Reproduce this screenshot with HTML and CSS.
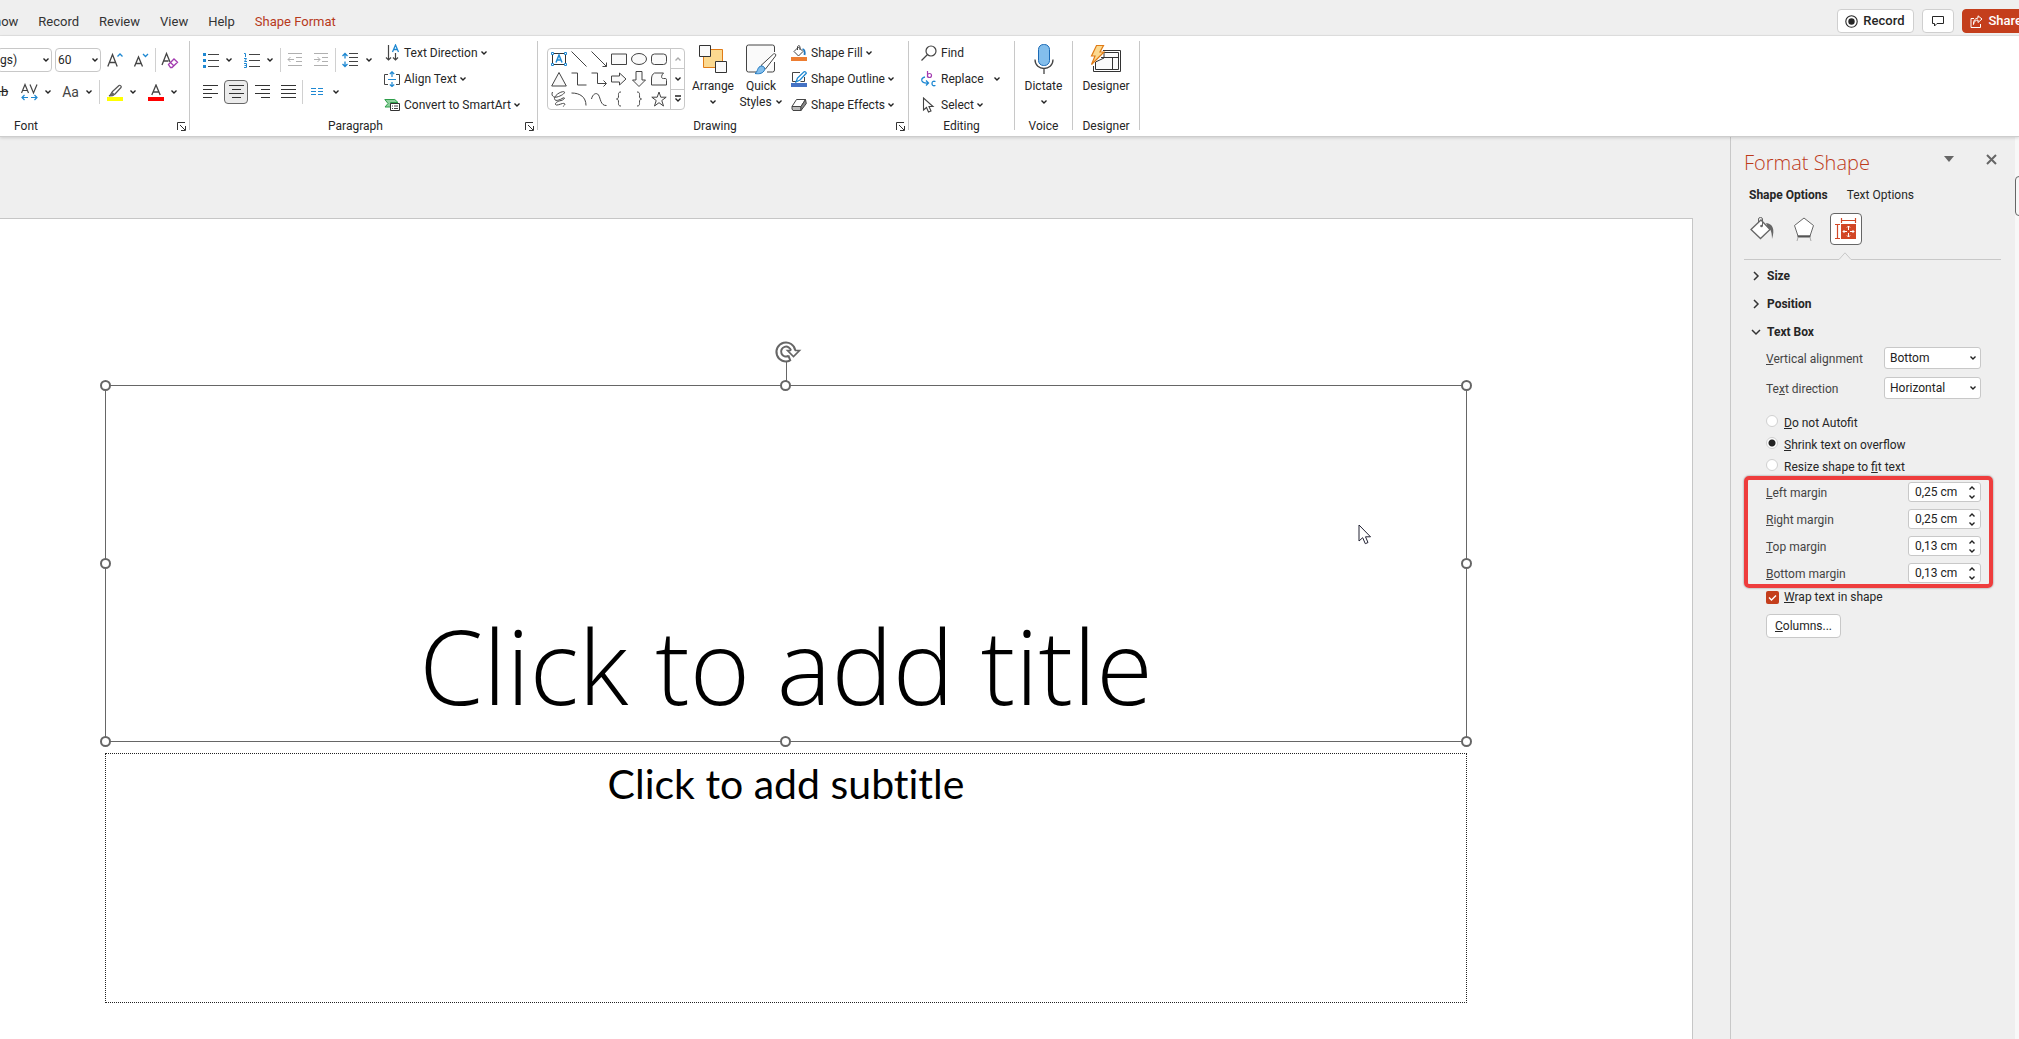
FILE: index.html
```
<!DOCTYPE html>
<html lang="en">
<head>
  <meta charset="UTF-8">
  <meta name="viewport" content="width=device-width, initial-scale=1.0">
  <title>Presentation - Format Shape</title>
  <link rel="stylesheet" href="styles.css">
</head>
<body>
  <!-- shared icons -->
  <svg class="defs" aria-hidden="true">
    <symbol id="chev" viewBox="0 0 8 8"><path d="M1.5 2.5 4 5l2.5-2.5" fill="none" stroke="currentColor" stroke-width="1.4"/></symbol>
    <symbol id="chev-up" viewBox="0 0 8 8"><path d="M1.5 5.5 4 3l2.5 2.5" fill="none" stroke="currentColor" stroke-width="1.4"/></symbol>
    <symbol id="launch" viewBox="0 0 9 9"><path d="M.5 8V.5H8M3 3l5 5M8.5 4v4.5H4" fill="none" stroke="#333"/></symbol>
  </svg>

  <header class="tabbar">
    <nav class="tabs">
      <a href="#">how</a>
      <a href="#">Record</a>
      <a href="#">Review</a>
      <a href="#">View</a>
      <a href="#">Help</a>
      <a href="#" class="current">Shape Format</a>
    </nav>
    <div class="actions">
      <button class="action">
        <svg width="13" height="13" viewBox="0 0 13 13"><circle cx="6.5" cy="6.5" r="5.7" fill="none" stroke="#262626" stroke-width="1.1"/><circle cx="6.5" cy="6.5" r="3.2" fill="#262626"/></svg>
        Record
      </button>
      <button class="action comment" aria-label="Comments">
        <svg width="12" height="12" viewBox="0 0 12 12"><path d="M.5 1.5h11v7H5L2.500 11V8.500H.5z" fill="none" stroke="#262626"/></svg>
      </button>
      <button class="action share">
        <svg width="13" height="13" viewBox="0 0 13 13" fill="none" stroke="#fff"><path d="M4 3.500H1v9h9.500V9"/><path d="M3.500 9.500C4 6.500 5.500 5 8 5V7.500L12 4 8 .800V3C5 3.200 3.300 5.500 3.500 9.500z"/></svg>
        Share
      </button>
    </div>
  </header>

  <section class="ribbon">
    <div class="group font-group">
      <div class="group-body rows">
        <div class="row">
          <button class="combo family"><span>gs)</span><svg class="chev"><use href="#chev"/></svg></button>
          <button class="combo size"><span>60</span><svg class="chev"><use href="#chev"/></svg></button>
          <button class="tool" aria-label="Increase font size"><svg width="16" height="16" viewBox="0 0 16 16" fill="none"><path d="M.8 14.500 5.500 2.500l4.700 12M2.500 10.500h6" stroke="#444" stroke-width="1.300"/><path d="M10.500 4.500 13 2l2.500 2.500" stroke="#1e88d2" stroke-width="1.300"/></svg></button>
          <button class="tool" aria-label="Decrease font size"><svg width="16" height="16" viewBox="0 0 16 16" fill="none"><path d="M1.500 14.500 5.500 5l4 9.500M3 11.500h5" stroke="#444" stroke-width="1.300"/><path d="M10 2l2.500 2.500L15 2" stroke="#1e88d2" stroke-width="1.300"/></svg></button>
          <i class="sep"></i>
          <button class="tool" aria-label="Clear formatting"><svg width="18" height="18" viewBox="0 0 18 18" fill="none"><path d="M1 14 5.500 2.500 9 11M2.500 10h5" stroke="#444" stroke-width="1.300"/><path d="M7.500 13.500 13 8l3.500 3.200L11 16.500H9.500zM9.500 11.500l3.500 3.500" stroke="#a33bb0" stroke-width="1.300"/></svg></button>
        </div>
        <div class="row">
          <button class="tool strike">ab</button>
          <button class="split" aria-label="Character spacing"><svg width="17" height="18" viewBox="0 0 17 18" fill="none"><path d="M.5 10 4 1.500 7.500 10M1.500 7.500h5M9 1.500 12.500 10 16 1.500" stroke="#444" stroke-width="1.200"/><path d="M1 14.500h6M3.500 12 1 14.500 3.500 17M10 14.500h6M13.500 12l2.500 2.500-2.500 2.500" stroke="#1e88d2" stroke-width="1.200"/></svg><svg class="chev"><use href="#chev"/></svg></button>
          <button class="split case"><span>Aa</span><svg class="chev"><use href="#chev"/></svg></button>
          <i class="sep"></i>
          <button class="split" aria-label="Text highlight color"><svg width="16" height="17" viewBox="0 0 16 17"><path d="M2 12c2-1 2-3 3.500-4.500L12 1.500c1-.8 3 1 2 2L8 10c-1.500 1.500-3 2-6 2z" fill="#fff" stroke="#555" stroke-width="1.200"/><path d="M2 12c2-1 2-3 3.500-4L8 10.500c-1.500 1-3 1.500-6 1.500z" fill="#666"/><path d="M0 13h16v4H0z" fill="#ffff00"/></svg><svg class="chev"><use href="#chev"/></svg></button>
          <button class="split" aria-label="Font color"><svg width="16" height="17" viewBox="0 0 16 17"><path d="M3.800 11 8 1l4.200 10M5.300 8h5.400" fill="none" stroke="#444" stroke-width="1.300"/><path d="M0 13h16v4H0z" fill="#f00"/></svg><svg class="chev"><use href="#chev"/></svg></button>
        </div>
      </div>
      <div class="group-label"><span>Font</span><button class="launcher" aria-label="Font settings"><svg width="9" height="9"><use href="#launch"/></svg></button></div>
    </div>

    <div class="group paragraph">
      <div class="group-body">
        <div class="rows">
          <div class="row">
            <button class="split" aria-label="Bullets"><svg width="16" height="16" viewBox="0 0 16 16"><path d="M0 1h3v3H0zM0 7h3v3H0zM0 13h3v3H0z" fill="#1e88d2"/><path d="M5 2.500h11M5 8.500h11M5 14.500h11" stroke="#444"/></svg><svg class="chev"><use href="#chev"/></svg></button>
            <button class="split" aria-label="Numbering"><svg width="16" height="16" viewBox="0 0 16 16" fill="none"><path d="M0 1.500h1.500V5M0 6.500h2.500L.500 9.500H3M0 11.500h2.500v4H0M.5 13.500h2" stroke="#1e88d2"/><path d="M5 2.500h11M5 8.500h11M5 14.500h11" stroke="#444"/></svg><svg class="chev"><use href="#chev"/></svg></button>
            <i class="sep"></i>
            <button class="tool" disabled aria-label="Decrease indent"><svg width="16" height="14" viewBox="0 0 16 14" fill="none" stroke="#b0b0b0"><path d="M1 .5h14M9 4.500h6M9 8.500h6M1 12.500h14M1 6.500h6M3.500 4 1 6.500 3.500 9"/></svg></button>
            <button class="tool" disabled aria-label="Increase indent"><svg width="16" height="14" viewBox="0 0 16 14" fill="none" stroke="#b0b0b0"><path d="M1 .5h14M9 4.500h6M9 8.500h6M1 12.500h14M1 6.500h6M4.500 4 7 6.500 4.500 9"/></svg></button>
            <i class="sep"></i>
            <button class="split" aria-label="Line spacing"><svg width="17" height="16" viewBox="0 0 17 16" fill="none"><path d="M3 1.500v5M3 9.500v5M.5 4 3 1.500 5.500 4M.5 12 3 14.500 5.500 12" stroke="#1e88d2" stroke-width="1.300"/><path d="M7 1.500h9M7 5.500h9M7 9.500h9M7 13.500h9" stroke="#444"/></svg><svg class="chev"><use href="#chev"/></svg></button>
          </div>
          <div class="row">
            <button class="tool" aria-label="Align left"><svg width="15" height="14" viewBox="0 0 15 14" stroke="#333"><path d="M0 .5h15M0 4.500h9M0 8.500h15M0 12.500h9"/></svg></button>
            <button class="tool on" aria-label="Center"><svg width="15" height="14" viewBox="0 0 15 14" stroke="#333"><path d="M0 .5h15M3 4.500h9M0 8.500h15M3 12.500h9"/></svg></button>
            <button class="tool" aria-label="Align right"><svg width="15" height="14" viewBox="0 0 15 14" stroke="#333"><path d="M0 .5h15M6 4.500h9M0 8.500h15M6 12.500h9"/></svg></button>
            <button class="tool" aria-label="Justify"><svg width="15" height="14" viewBox="0 0 15 14" stroke="#333"><path d="M0 .5h15M0 4.500h15M0 8.500h15M0 12.500h15"/></svg></button>
            <i class="sep"></i>
            <button class="split" aria-label="Columns"><svg width="16" height="14" viewBox="0 0 16 14" stroke="#1e88d2"><path d="M1 3.500h5M8 3.500h5M1 6.500h5M8 6.500h5M1 9.500h5M8 9.500h5"/></svg><svg class="chev"><use href="#chev"/></svg></button>
          </div>
        </div>
        <div class="list">
          <button class="item"><svg width="16" height="18" viewBox="0 0 16 18" fill="none"><path d="M4.500 1v15M2 13.500l2.500 2.500L7 13.500M11.500 9v7M9 13.500l2.500 2.500 2.500-2.500" stroke="#444" stroke-width="1.200"/><path d="M8.500 8 11.500 1l3 7M9.500 5.500h4" stroke="#1e88d2" stroke-width="1.300"/></svg>Text Direction<svg class="chev"><use href="#chev"/></svg></button>
          <button class="item"><svg width="16" height="16" viewBox="0 0 16 16" fill="none"><path d="M4 3.500H.5v10H4M12 3.500h3.500v10H12" stroke="#444"/><path d="M4 8.500h8M8 1v5M5.800 3 8 .800 10.200 3M8 16v-5M5.800 13.500 8 15.500l2.200-2" stroke="#1e88d2" stroke-width="1.200"/></svg>Align Text<svg class="chev"><use href="#chev"/></svg></button>
          <button class="item"><svg width="16" height="14" viewBox="0 0 16 14"><path d="M.8 1.500h10L14 4.500H6.500V9H1l3-3.500z" fill="#8fd19e" stroke="#2e9e4a"/><path d="M6.500 5.500h9v7h-9z" fill="#fff" stroke="#333"/><path d="M8 8h1m1 0h4M8 10.500h1m1 0h4" stroke="#444"/></svg>Convert to SmartArt<svg class="chev"><use href="#chev"/></svg></button>
        </div>
      </div>
      <div class="group-label"><span>Paragraph</span><button class="launcher" aria-label="Paragraph settings"><svg width="9" height="9"><use href="#launch"/></svg></button></div>
    </div>

    <div class="group drawing">
      <div class="group-body">
        <div class="gallery">
          <div class="shapes">
            <button aria-label="Text box"><svg viewBox="0 0 16 16"><path d="M1.500 3v10M14.500 3v10M3 2.500h10M3 13.500h10" stroke="#333"/><path d="M5 11.500 8 4l3 7.500M6 9h4" stroke="#1e88d2" stroke-width="1.500" fill="none"/><path d="M.5 1.500h2v2h-2zM13.500 1.500h2v2h-2zM.5 12.500h2v2h-2zM13.500 12.500h2v2h-2z" fill="#fff" stroke="#1e88d2"/></svg></button>
            <button aria-label="Line"><svg viewBox="0 0 16 16"><path d="m.5.500 15 15"/></svg></button>
            <button aria-label="Arrow"><svg viewBox="0 0 16 16"><path d="m.5.500 15 15M15.500 11.500v4h-4"/></svg></button>
            <button aria-label="Rectangle"><svg viewBox="0 0 16 16"><path d="M.5 3h15v10.500H.5z"/></svg></button>
            <button aria-label="Oval"><svg viewBox="0 0 16 16"><ellipse cx="8" cy="8" rx="7.500" ry="5.500"/></svg></button>
            <button aria-label="Rounded rectangle"><svg viewBox="0 0 16 16"><rect x=".5" y="3" width="15" height="10.500" rx="3"/></svg></button>
            <button aria-label="Triangle"><svg viewBox="0 0 16 16"><path d="M8 1.500 15.300 15H.700z"/></svg></button>
            <button aria-label="Elbow connector"><svg viewBox="0 0 16 16"><path d="M.5 2h6v12H15.500"/></svg></button>
            <button aria-label="Elbow arrow"><svg viewBox="0 0 16 16"><path d="M.5 2h6v10.500H15M12.500 9.500l3 3-3 3"/></svg></button>
            <button aria-label="Right arrow"><svg viewBox="0 0 16 16"><path d="M.5 5h8V2l6.500 6-6.500 6v-3h-8z"/></svg></button>
            <button aria-label="Down arrow"><svg viewBox="0 0 16 16"><path d="M5 .5h6v8.500h3.500L8 15.500 1.500 9H5z"/></svg></button>
            <button aria-label="Freeform"><svg viewBox="0 0 16 16"><path d="M3.500 2h9c-3 3-2 6 0 5.500h2c1 0 1 1 1 2V14H.5V8c0-3 1-5 3-6z"/></svg></button>
            <button aria-label="Scribble"><svg viewBox="0 0 16 16"><path d="M1.500 1C0 4 2 7 6 6c4-1 8-3.500 7.500-5C12-.5 4 3 3.500 7.500 3.500 11 9 9 12 7c3-1 1 2-2 2.500-4 1-6 2.500-5.500 4 .5 1.500 5-.5 7-1 2-.5 3 .5 2 1.500s-1.500 1-1 1.500"/></svg></button>
            <button aria-label="Arc"><svg viewBox="0 0 16 16"><path d="M.5 2C9 2 15 6 15 14.500"/></svg></button>
            <button aria-label="Curve"><svg viewBox="0 0 16 16"><path d="M.5 8c1-5 5-7 7-4s2 11 8 10.500"/></svg></button>
            <button aria-label="Left brace"><svg viewBox="0 0 16 16"><path d="M10 1c-3 0-2.500 2-2.500 4S7 8 5.500 8C7 8 7.500 9 7.500 11s-.5 4 2.500 4"/></svg></button>
            <button aria-label="Right brace"><svg viewBox="0 0 16 16"><path d="M6 1c3 0 2.500 2 2.500 4S9 8 10.500 8C9 8 8.500 9 8.500 11s.5 4-2.500 4"/></svg></button>
            <button aria-label="Star"><svg viewBox="0 0 16 16"><path d="m8 1 1.800 5.200h5.400l-4.400 3.300 1.700 5.500L8 11.700 3.500 15l1.700-5.500L.8 6.200h5.400z"/></svg></button>
          </div>
          <div class="scroller">
            <button disabled aria-label="Scroll up"><svg class="chev"><use href="#chev-up"/></svg></button>
            <button aria-label="Scroll down"><svg class="chev"><use href="#chev"/></svg></button>
            <button aria-label="More shapes"><svg class="chev" viewBox="0 0 8 8"><path d="M1 1h6M1.500 3.500 4 6l2.500-2.500" fill="none" stroke="#222" stroke-width="1.300"/></svg></button>
          </div>
        </div>
        <button class="big arrange">
          <svg width="30" height="30" viewBox="0 0 30 30" stroke="#333"><path d="M5.500 5.500h19v18h-19z" fill="#fbd990" stroke="#e07b16"/><path d="M1.500 1.500h11v11h-11z" fill="#fafafa"/><path d="M17.500 17.500h11v11h-11z" fill="#fafafa"/></svg>
          <span>Arrange</span><svg class="chev"><use href="#chev"/></svg>
        </button>
        <button class="big styles">
          <svg width="32" height="32" viewBox="0 0 32 32"><path d="M12 29H3.500q-2 0-2-2V4q0-2 2-2h24q2 0 2 2v5M29.500 19v8q0 2-2 2H22" fill="#fafafa" stroke="#444"/><path d="M16 22.500 28.500 11c1.500-1 3 .5 2 2L20.500 26z" fill="#fff" stroke="#444"/><path d="M10 30.500c3-1.500 2-7 6.500-7.500 3 0 4 3 2.500 5-2 3-6 3-9 2.500z" fill="#83beec" stroke="#1e78c0"/></svg>
          <span>Quick</span><span>Styles <svg class="chev"><use href="#chev"/></svg></span>
        </button>
        <div class="list">
          <button class="item"><svg width="16" height="16" viewBox="0 0 16 16"><path d="M3 6.500 7.500 2 12 6.500 7.500 11z" fill="#fff" stroke="#444"/><path d="M6.500 5V1.500q1.500-2 2.500 0V5" fill="none" stroke="#444"/><path d="M11.500 4c2 .5 2.500 3 2 6" fill="none" stroke="#1e78c0" stroke-width="1.800"/><path d="M0 12h16v4H0z" fill="#ed7d31"/></svg>Shape Fill<svg class="chev"><use href="#chev"/></svg></button>
          <button class="item"><svg width="16" height="16" viewBox="0 0 16 16"><path d="M9 1.500H1.500v9h4M13.500 6v4.500h-4" fill="none" stroke="#444"/><path d="M5 11l1.500-4L13 .8q2-.5 2.300 1.500L9 9z" fill="#fff" stroke="#1e88d2" stroke-width="1.300"/><path d="M0 12h16v4H0z" fill="#4472c4"/></svg>Shape Outline<svg class="chev"><use href="#chev"/></svg></button>
          <button class="item"><svg width="16" height="14" viewBox="0 0 16 14"><path d="M5.500 1.500h9L10 8.500H1z" fill="#fff" stroke="#444"/><path d="M1 8.500h9v4H2q-1.500-1-1-4z" fill="#bbb" stroke="#444"/><path d="M10 8.500l4.500-7 .8 4L10 12.500z" fill="#888" stroke="#444"/></svg>Shape Effects<svg class="chev"><use href="#chev"/></svg></button>
        </div>
      </div>
      <div class="group-label"><span>Drawing</span><button class="launcher" aria-label="Drawing settings"><svg width="9" height="9"><use href="#launch"/></svg></button></div>
    </div>

    <div class="group editing">
      <div class="group-body">
        <div class="list">
          <button class="item"><svg width="16" height="16" viewBox="0 0 16 16" fill="none" stroke="#444" stroke-width="1.200"><circle cx="10" cy="6" r="5"/><path d="M6.500 9.500.5 15.500"/></svg>Find</button>
          <button class="item wide"><svg width="16" height="16" viewBox="0 0 16 16" fill="none"><path d="M6.500 0v6.500M6.500 4.500q0-2 2-2t2 2-2 2-2-2" stroke="#a33bb0" stroke-width="1.200"/><path d="M14.500 10.500q-3.500-1-3.500 2t3.500 2M4 6q-4 1-3 4 1 2.500 6 2M5 9.500 7.500 12 5 14.500" stroke="#1e88d2" stroke-width="1.300"/></svg>Replace<svg class="chev"><use href="#chev"/></svg></button>
          <button class="item"><svg width="16" height="16" viewBox="0 0 16 16"><path d="M2.500 1v12l3-2.500 2 4.500 2.500-1-2-4.500h4z" fill="#fff" stroke="#444" stroke-width="1.100"/></svg>Select<svg class="chev"><use href="#chev"/></svg></button>
        </div>
      </div>
      <div class="group-label"><span>Editing</span></div>
    </div>

    <div class="group voice">
      <div class="group-body">
        <button class="big">
          <svg width="20" height="32" viewBox="0 0 20 32"><rect x="4.500" y="1.500" width="11" height="21" rx="5" fill="#83beec" stroke="#1b6ab5"/><path d="M1 16.500c0 12 18 12 18 0M10 25.500V31" fill="none" stroke="#444" stroke-width="1.300"/></svg>
          <span>Dictate</span><svg class="chev"><use href="#chev"/></svg>
        </button>
      </div>
      <div class="group-label"><span>Voice</span></div>
    </div>

    <div class="group designer">
      <div class="group-body">
        <button class="big">
          <svg width="32" height="30" viewBox="0 0 32 30"><path d="M3.500 22v5.500h27v-21H13" fill="none" stroke="#333"/><path d="M5.500 18v7.500h23v-17H14v5.500z" fill="#fafafa" stroke="#333"/><path d="M11 13.500h17.500M22.500 13.500v12" stroke="#333"/><path d="M6.500 1.500h7L10 8h4L1.500 20.500 5 12H1.500z" fill="#fbd990" stroke="#e07b16" stroke-width="1.200"/></svg>
          <span>Designer</span>
        </button>
      </div>
      <div class="group-label"><span>Designer</span></div>
    </div>
  </section>

  <main class="workspace">
    <div class="canvas">
      <div class="slide">
        <div class="title-box">
          <h1>Click to add title</h1>
          <i class="stem"></i>
          <svg class="rotate" width="28" height="24" viewBox="0 0 28 24" fill="none" stroke="#666" stroke-width="2"><path d="M16 20.500A9.500 9.500 0 1 1 21.300 10.500"/><path d="M14.500 16A5 5 0 1 1 17 10.500"/><path d="M16.500 21 14.300 15.300"/><path d="M21 10.500h4.500l-6 6-6-6h3.500" stroke-width="1.600"/></svg>
          <i class="handle n w"></i><i class="handle n c"></i><i class="handle n e"></i>
          <i class="handle m w"></i><i class="handle m e"></i>
          <i class="handle s w"></i><i class="handle s c"></i><i class="handle s e"></i>
        </div>
        <div class="subtitle-box"><p>Click to add subtitle</p></div>
      </div>
      <svg class="cursor" width="14" height="21" viewBox="0 0 14 21"><path d="M1 1v16l3.700-3.300 2.600 6 2.700-1.200-2.500-5.700h5z" fill="#fff" stroke="#223"/></svg>
    </div>

    <aside class="pane">
      <div class="pane-head">
        <h2>Format Shape</h2>
        <button class="pane-btn" aria-label="Pane options"><svg width="10" height="6" viewBox="0 0 10 6"><path d="M0 0h10L5 6z" fill="#666"/></svg></button>
        <button class="pane-btn" aria-label="Close"><svg width="11" height="11" viewBox="0 0 11 11"><path d="m1 1 9 9M10 1l-9 9" stroke="#666" stroke-width="2"/></svg></button>
      </div>
      <div class="pane-tabs">
        <button class="selected">Shape Options</button>
        <button>Text Options</button>
      </div>
      <div class="pane-icons">
        <button aria-label="Fill and line"><svg width="26" height="26" viewBox="0 0 26 26"><path d="M2 13.500 12 4l9 9.500-9.500 9z" fill="#fff" stroke="#666" stroke-width="1.300"/><path d="M9.500 7V3q0-1.500 2-1.500t2 1.500v7" fill="none" stroke="#666"/><path d="M17 7c7 1 9 6 6 16 0-6-1-10-4-11z" fill="#666"/><circle cx="12.500" cy="10" r="1.300" fill="#666"/></svg></button>
        <button aria-label="Effects"><svg width="24" height="26" viewBox="0 0 24 26"><path d="M12 2 21.500 9.500 18 20H6L2.500 9.500z" fill="#fff" stroke="#666"/><path d="M5.500 20.500h13" stroke="#555" stroke-width="2"/><path d="M6 21.500 5 25M18 21.500 19 25" stroke="#aaa"/></svg></button>
        <button class="selected" aria-label="Size and properties"><svg width="22" height="22" viewBox="0 0 22 22"><path d="M6 6h15v15H6z" fill="#d24726"/><path d="M6.500 0v5M20.500 0v5M7 2.500h13M0 6.500h5M0 20.500h5M2.500 7v13" stroke="#d24726" stroke-width="1.200"/><path d="M13.500 8v4M13.500 15v4M8 13.500h4M15 13.500h4M12 9.500 13.500 8 15 9.500M12 17.500l1.500 1.500 1.500-1.500M9.500 12 8 13.500 9.500 15M17.500 12l1.500 1.500-1.500 1.500" fill="none" stroke="#fff"/></svg></button>
      </div>
      <div class="divider"><i></i><svg width="14" height="8" viewBox="0 0 14 8"><path d="M0 7.500h1L7 .800l6 6.700h1" fill="none" stroke="#c8c8c8"/></svg><i></i></div>

      <button class="section"><svg width="10" height="10" viewBox="0 0 10 10"><path d="m3 1 4 4-4 4"/></svg>Size</button>
      <button class="section"><svg width="10" height="10" viewBox="0 0 10 10"><path d="m3 1 4 4-4 4"/></svg>Position</button>
      <button class="section"><svg width="10" height="10" viewBox="0 0 10 10"><path d="m1 3 4 4 4-4"/></svg>Text Box</button>

      <div class="fields">
        <div class="field">
          <label for="valign"><u>V</u>ertical alignment</label>
          <div class="select"><select id="valign"><option>Bottom</option></select><svg class="chev"><use href="#chev"/></svg></div>
        </div>
        <div class="field">
          <label for="textdir">Te<u>x</u>t direction</label>
          <div class="select"><select id="textdir"><option>Horizontal</option></select><svg class="chev"><use href="#chev"/></svg></div>
        </div>
      </div>
      <div class="options">
        <label><input type="radio" name="autofit"><span><u>D</u>o not Autofit</span></label>
        <label><input type="radio" name="autofit" checked><span><u>S</u>hrink text on overflow</span></label>
        <label><input type="radio" name="autofit"><span>Resize shape to <u>f</u>it text</span></label>
      </div>
      <div class="margins">
        <div class="field">
          <label for="ml"><u>L</u>eft margin</label>
          <div class="spin"><input id="ml" type="text" value="0,25 cm"><span><button aria-label="Increase"><svg class="chev"><use href="#chev-up"/></svg></button><button aria-label="Decrease"><svg class="chev"><use href="#chev"/></svg></button></span></div>
        </div>
        <div class="field">
          <label for="mr"><u>R</u>ight margin</label>
          <div class="spin"><input id="mr" type="text" value="0,25 cm"><span><button aria-label="Increase"><svg class="chev"><use href="#chev-up"/></svg></button><button aria-label="Decrease"><svg class="chev"><use href="#chev"/></svg></button></span></div>
        </div>
        <div class="field">
          <label for="mt"><u>T</u>op margin</label>
          <div class="spin"><input id="mt" type="text" value="0,13 cm"><span><button aria-label="Increase"><svg class="chev"><use href="#chev-up"/></svg></button><button aria-label="Decrease"><svg class="chev"><use href="#chev"/></svg></button></span></div>
        </div>
        <div class="field">
          <label for="mb"><u>B</u>ottom margin</label>
          <div class="spin"><input id="mb" type="text" value="0,13 cm"><span><button aria-label="Increase"><svg class="chev"><use href="#chev-up"/></svg></button><button aria-label="Decrease"><svg class="chev"><use href="#chev"/></svg></button></span></div>
        </div>
      </div>
      <label class="wrap">
        <span class="check"><input type="checkbox" checked><svg width="13" height="13" viewBox="0 0 13 13"><path d="m3 6.500 2.500 2.500L10 4.500" fill="none" stroke="#fff" stroke-width="1.400"/></svg></span>
        <span><u>W</u>rap text in shape</span>
      </label>
      <button class="columns"><u>C</u>olumns...</button>
    </aside>
    <div class="edge"><i></i></div>
  </main>
</body>
</html>
```
FILE: styles.css
```
* {
  box-sizing: border-box;
}
body {
  margin: 0;
  min-height: 100vh;
  display: flex;
  flex-direction: column;
  overflow-x: hidden;
  background: #efefef;
  color: #262626;
  font: 12px/16px Roboto, "Open Sans", sans-serif;
}
button, input, select {
  font: inherit;
  color: inherit;
}
button {
  display: flex;
  align-items: center;
  justify-content: center;
  margin: 0;
  padding: 0;
  border: 0;
  background: none;
  white-space: nowrap;
}
svg {
  display: block;
  flex: none;
}
.defs {
  position: absolute;
  width: 0;
  height: 0;
}
.chev {
  width: 8px;
  height: 8px;
  color: #222;
}

/* tab bar */
.tabbar {
  display: flex;
  justify-content: space-between;
  align-items: flex-end;
  height: 36px;
  border-bottom: 1px solid #e2e2e2;
  overflow: hidden;
}
.tabs {
  display: flex;
  gap: 20px;
  margin-left: -6px;
  font-size: 13px;
  line-height: 26px;
}
.tabs a {
  color: #333;
  text-decoration: none;
}
.tabs .current {
  color: #b7391b;
}
.actions {
  display: flex;
  gap: 8px;
  margin: 0 -13px 2px 0;
}
.action {
  gap: 5px;
  height: 24px;
  padding: 0 9px 0 7px;
  border: 1px solid #cfcfcf;
  border-radius: 4px;
  background: #fff;
  font-size: 13px;
  font-weight: 500;
}
.comment {
  width: 32px;
  padding: 0;
}
.share {
  border-color: #c43e1c;
  background: #c43e1c;
  color: #fff;
}

/* ribbon */
.ribbon {
  position: relative;
  display: flex;
  height: 101px;
  padding-top: 5px;
  background: #fff;
  border-bottom: 1px solid #cdcdcd;
  box-shadow: 0 1px 3px rgba(0, 0, 0, .15);
  overflow: hidden;
  flex: none;
}
.group {
  display: flex;
  flex-direction: column;
  justify-content: space-between;
  flex: none;
  height: 89px;
  border-right: 1px solid #c8c8c8;
}
.group-body {
  display: flex;
}
.group-label {
  display: flex;
  align-items: center;
  height: 8px;
}
.group-label span {
  flex: 1;
  text-align: center;
}
.launcher {
  width: 16px;
}
.rows {
  flex-direction: column;
  padding-top: 6px;
}
.row {
  display: flex;
  align-items: center;
  height: 26px;
}
.row + .row {
  margin-top: 6px;
}
.font-group {
  width: 311px;
  margin-left: -121px;
}
.font-group .row {
  justify-content: flex-end;
  padding-right: 6px;
}
.combo {
  justify-content: space-between;
  height: 24px;
  border: 1px solid #c8c8c8;
  border-radius: 4px;
  padding: 0 1px 0 2px;
}
.family {
  width: 55px;
  margin-right: 3px;
}
.size {
  width: 46px;
  margin-right: 1px;
}
.tool {
  width: 26px;
  height: 24px;
}
.split {
  gap: 6px;
  width: 41px;
  height: 24px;
}
.strike {
  padding-right: 4px;
  font-size: 13px;
  text-decoration: line-through;
}
.case {
  font-size: 14px;
  color: #444;
}
.on {
  width: 24px;
  margin: 0 1px;
  border: 1px solid #666;
  border-radius: 4px;
  background: #ebebeb;
}
.sep {
  width: 1px;
  height: 24px;
  margin: 0 1px;
  background: #d0d0d0;
}
.paragraph {
  width: 348px;
  padding-left: 7px;
}
.paragraph .group-label {
  margin-left: -7px;
}
.list {
  display: flex;
  flex-direction: column;
  margin-top: -1px;
}
.paragraph .list {
  padding-left: 6px;
}
.item {
  justify-content: flex-start;
  gap: 4px;
  height: 26px;
}
.item .chev {
  margin-left: -2px;
}
.wide {
  width: 80px;
}
.item.wide .chev {
  margin-left: auto;
}
.drawing {
  width: 371px;
}
.gallery {
  display: flex;
  width: 138px;
  height: 62px;
  margin: 7px 5px 0 9px;
  border: 1px solid #c8c8c8;
  border-radius: 4px;
}
.shapes {
  display: grid;
  grid-template-columns: repeat(6, 20px);
  flex: 1;
  padding-left: 1px;
}
.shapes svg {
  width: 16px;
  height: 16px;
  fill: #fafafa;
  stroke: #444;
}
.shapes button:nth-child(n+13):nth-child(-n+17) svg,
.shapes button:nth-child(8) svg,
.shapes button:nth-child(9) svg {
  fill: none;
}
.scroller {
  display: flex;
  flex-direction: column;
  width: 14px;
  border-left: 1px solid #c8c8c8;
}
.scroller button {
  flex: 1;
}
.scroller button + button {
  border-top: 1px solid #c8c8c8;
}
.scroller button:disabled .chev {
  color: #aaa;
}
.big {
  flex-direction: column;
  justify-content: flex-start;
  width: 46px;
  height: 70px;
  padding-top: 2px;
}
.big > svg:first-child {
  height: 32px;
  margin-bottom: 3px;
}
.big span {
  display: flex;
  align-items: center;
  gap: 3px;
}
.big > .chev {
  margin-top: 4px;
}
.styles {
  width: 50px;
  margin-right: 5px;
}
.editing {
  width: 106px;
}
.editing .list {
  padding-left: 12px;
}
.voice {
  width: 58px;
}
.designer {
  width: 67px;
}
.voice .group-body, .designer .group-body {
  justify-content: center;
}

/* slide area */
.workspace {
  display: flex;
  flex: 1;
}
.canvas {
  position: relative;
  flex: 1;
  padding: 81px 37px 0 0;
  display: flex;
}
.slide {
  flex: 1;
  padding: 166px 225px 36px 105px;
  background: #fff;
  border: solid #c6c6c6;
  border-width: 1px 1px 0 0;
}
.title-box {
  position: relative;
  display: flex;
  align-items: flex-end;
  justify-content: center;
  height: 357px;
  border: 1px solid #666;
}
.title-box h1 {
  margin: 0 0 14px;
  color: #000;
  font: 300 103px/124px "Open Sans", sans-serif;
}
.subtitle-box {
  height: 250px;
  margin-top: 11px;
  padding-top: 5px;
  border: 1px dotted #222;
  text-align: center;
}
.subtitle-box p {
  margin: 0;
  color: #000;
  font: 41px/50px Lato, sans-serif;
  font-variant-ligatures: none;
}
.handle {
  position: absolute;
  width: 11px;
  height: 11px;
  border: 2px solid #666;
  border-radius: 50%;
  background: #fff;
}
.n { top: -6px; }
.m { top: calc(50% - 6px); }
.s { bottom: -6px; }
.w { left: -6px; }
.c { left: calc(50% - 6px); }
.e { right: -6px; }
.stem {
  position: absolute;
  top: -25px;
  left: 50%;
  width: 1px;
  height: 25px;
  background: #666;
}
.rotate {
  position: absolute;
  top: -46px;
  left: calc(50% - 12px);
}
.cursor {
  position: absolute;
  top: 387px;
  right: 358px;
}

/* format pane */
.pane {
  width: 285px;
  padding: 4px 14px 0 13px;
  border-left: 1px solid #c8c8c8;
}
.pane-head {
  display: flex;
  height: 44px;
}
.pane-head h2 {
  flex: 1;
  margin: 0;
  color: #bd3a1a;
  font: 300 20px/44px "Open Sans", sans-serif;
}
.pane-btn {
  width: 42px;
  height: 36px;
}
.pane-btn:last-child {
  margin-right: -11px;
}
.pane-tabs {
  display: flex;
  gap: 19px;
  height: 20px;
  padding-left: 5px;
}
.pane-tabs .selected, .section {
  font-weight: 700;
}
.pane-icons {
  display: flex;
  gap: 10px;
  margin: 8px 0 7px 2px;
}
.pane-icons button {
  width: 32px;
  height: 32px;
}
.pane-icons .selected {
  border: 1px solid #666;
  border-radius: 4px;
  background: #fff;
}
.divider {
  display: flex;
  align-items: flex-end;
  margin-bottom: 2px;
}
.divider i {
  width: 94px;
  height: 1px;
  background: #c8c8c8;
}
.divider i:last-child {
  flex: 1;
}
.section {
  gap: 6px;
  height: 28px;
  padding-left: 7px;
}
.section svg {
  fill: none;
  stroke: #333;
  stroke-width: 1.5;
}
.fields {
  display: flex;
  flex-direction: column;
  gap: 8px;
  margin-top: 1px;
  padding: 0 20px 0 22px;
}
.field {
  display: flex;
  align-items: center;
  justify-content: space-between;
  color: #444;
}
.field label, .options span {
  padding-top: 2px;
}
.select {
  display: grid;
  align-items: center;
  width: 97px;
  color: #222;
}
.select > * {
  grid-area: 1 / 1;
}
.select select {
  appearance: none;
  height: 22px;
  padding: 0 5px;
  border: 1px solid #c8c8c8;
  border-radius: 3px;
  background: #fff;
}
.select .chev {
  justify-self: end;
  margin-right: 4px;
  pointer-events: none;
}
.options {
  margin: 12px 0 -1px 22px;
}
.options label {
  display: flex;
  align-items: center;
  gap: 6px;
  height: 22px;
}
.options input {
  appearance: none;
  width: 12px;
  height: 12px;
  margin: 0 0 3px;
  border: 1px solid #d0d0d0;
  border-radius: 50%;
  background: #fff;
}
.options input:checked {
  background: radial-gradient(#222 3px, #fff 4px);
}
.margins {
  display: flex;
  flex-direction: column;
  gap: 7px;
  margin-right: 8px;
  padding: 2px 8px 1px 18px;
  border: 4px solid #ee3d3d;
  border-radius: 5px;
  box-shadow: 0 0 2px rgba(0, 0, 0, .5);
}
.spin {
  display: flex;
  width: 73px;
  height: 20px;
  border: 1px solid #c8c8c8;
  border-radius: 3px;
  background: #fff;
  color: #222;
}
.spin input {
  width: 54px;
  padding: 0 0 0 6px;
  border: 0;
  background: none;
}
.spin span {
  display: flex;
  flex-direction: column;
  justify-content: space-around;
  margin-left: auto;
  padding-right: 4px;
}
.wrap {
  display: flex;
  align-items: center;
  gap: 5px;
  height: 18px;
  margin-left: 22px;
}
.check {
  display: grid;
}
.check > * {
  grid-area: 1 / 1;
}
.check input {
  appearance: none;
  width: 13px;
  height: 13px;
  margin: 0;
  border-radius: 2px;
  background: #c43e1c;
}
.columns {
  display: block;
  width: 75px;
  height: 24px;
  margin: 8px 0 0 22px;
  border: 1px solid #c8c8c8;
  border-radius: 4px;
  background: #fff;
}

/* window edge */
.edge {
  width: 4px;
  padding-top: 39px;
  background: #f8f8f8;
  overflow: hidden;
}
.edge i {
  display: block;
  width: 12px;
  height: 40px;
  border: 1px solid #666;
  border-radius: 4px;
}
```
